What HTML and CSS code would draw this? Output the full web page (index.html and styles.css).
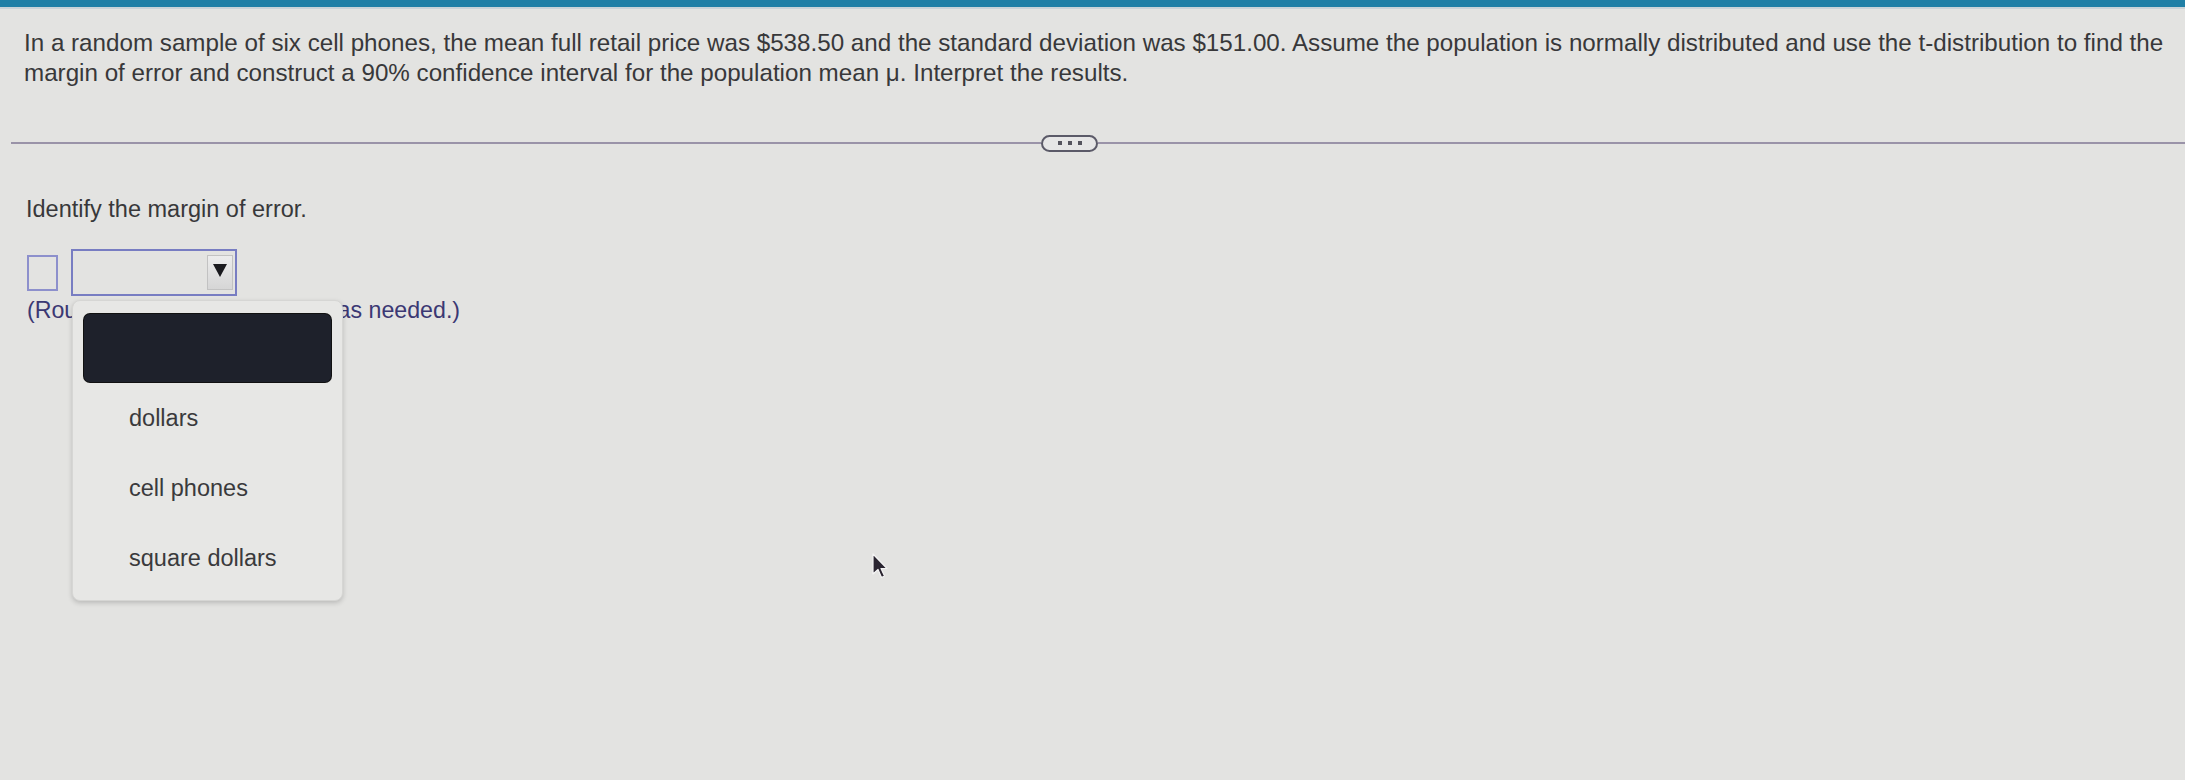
FILE: index.html
```html
<!DOCTYPE html>
<html lang="en">
<head>
<meta charset="utf-8">
<title>Margin of error</title>
<link rel="stylesheet" href="styles.css">
</head>
<body>
<div class="topbar"></div>
<div class="page">
  <p class="question">In a random sample of six cell phones, the mean full retail price was $538.50 and the standard deviation was $151.00. Assume the population is normally distributed and use the t-distribution to find the margin of error and construct a 90% confidence interval for the population mean &mu;. Interpret the results.</p>

  <div class="divider">
    <span class="rule rule-left"></span>
    <span class="pill"><i></i><i></i><i></i></span>
    <span class="rule rule-right"></span>
  </div>

  <div class="answer">
    <p class="prompt">Identify the margin of error.</p>
    <div class="inputs">
      <span class="numbox"></span>
      <span class="select">
        <span class="select-btn"><span class="tri"></span></span>
      </span>
    </div>
    <p class="hint">(Round to two decimal places as needed.)</p>

    <div class="menu">
      <div class="menu-selected"></div>
      <div class="menu-item">dollars</div>
      <div class="menu-item">cell phones</div>
      <div class="menu-item">square dollars</div>
    </div>
  </div>
</div>
<svg class="cursor" width="16" height="26" viewBox="0 0 16 26">
  <path d="M1 1 L1 21 L6 16.5 L9.5 24.5 L12.5 23 L9 15.5 L15 15.5 Z" fill="#2a2530" stroke="#f4f4f4" stroke-width="1.2" stroke-linejoin="round"/>
</svg>
</body>
</html>
```
FILE: styles.css
```css
html, body {
  margin: 0;
  padding: 0;
}
body {
  background: #e3e3e1;
  font-family: "Liberation Sans", Arial, Helvetica, sans-serif;
  color: #38383a;
  width: 2185px;
  height: 780px;
  overflow: hidden;
  position: relative;
}
.topbar {
  height: 7px;
  background: #1f7fa6;
  border-bottom: 2px solid #c9d3d8;
}
.page {
  padding: 19px 0 0 11px;
}
.question {
  margin: 0;
  padding-left: 13px;
  padding-right: 0;
  font-size: 24.2px;
  line-height: 30px;
}
.divider {
  margin-top: 47px;
  display: flex;
  align-items: center;
  height: 16px;
}
.rule {
  height: 2px;
  background: #9a93a8;
}
.rule-left {
  width: 1030px;
}
.rule-right {
  flex: 1;
}
.pill {
  box-sizing: border-box;
  width: 57px;
  height: 17px;
  border: 2px solid #5b5a68;
  border-radius: 9px;
  background: #e6e6e6;
  display: flex;
  align-items: center;
  justify-content: center;
  gap: 6px;
}
.pill i {
  width: 4px;
  height: 4px;
  background: #55545e;
}
.answer {
  position: relative;
  padding-left: 15px;
  margin-top: 43px;
}
.prompt {
  margin: 0;
  font-size: 23.5px;
  line-height: 30px;
}
.inputs {
  margin-top: 25px;
  display: flex;
  align-items: center;
  gap: 13px;
  height: 47px;
}
.numbox {
  box-sizing: border-box;
  width: 31px;
  height: 36px;
  border: 2px solid #8d90cc;
  margin-left: 1px;
}
.select {
  box-sizing: border-box;
  width: 166px;
  height: 47px;
  border: 2px solid #787dc2;
  display: flex;
  align-items: center;
  justify-content: flex-end;
  padding-right: 2px;
}
.select-btn {
  box-sizing: border-box;
  width: 26px;
  height: 35px;
  border: 1px solid #c2c2c2;
  background: linear-gradient(#ececec, #d6d6d6);
  display: flex;
  align-items: center;
  justify-content: center;
}
.tri {
  width: 0;
  height: 0;
  border-left: 7px solid transparent;
  border-right: 7px solid transparent;
  border-top: 13px solid #1a1a1e;
  margin-top: -4px;
}
.hint {
  margin: 0;
  margin-top: -1px;
  padding-left: 1px;
  font-size: 23.2px;
  line-height: 30px;
  color: #3b3873;
}
.menu {
  position: absolute;
  left: 61px;
  top: 106px;
  box-sizing: border-box;
  width: 271px;
  height: 301px;
  padding: 13px 11px 0;
  background: #e7e7e5;
  border: 1px solid #d6d6d4;
  border-radius: 8px;
  box-shadow: 0 2px 5px rgba(0, 0, 0, 0.18);
}
.menu-selected {
  height: 68px;
  border-radius: 6px;
  background: #1e212b;
  box-shadow: 0 0 0 1px #111;
}
.menu-item {
  height: 70px;
  line-height: 72px;
  padding-left: 45px;
  font-size: 23.5px;
  color: #3a3a3c;
}
.cursor {
  position: absolute;
  left: 872px;
  top: 553px;
}
```
